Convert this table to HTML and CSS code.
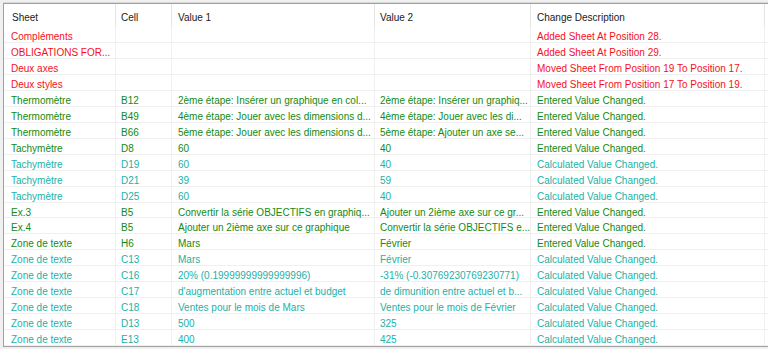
FILE: index.html
```html
<!DOCTYPE html>
<html>
<head>
<meta charset="utf-8">
<link rel="stylesheet" href="styles.css">
</head>
<body>
<div class="frame">
  <div class="row head">
    <div class="c c1">Sheet</div>
    <div class="c c2">Cell</div>
    <div class="c c3">Value 1</div>
    <div class="c c4">Value 2</div>
    <div class="c c5">Change Description</div>
    <div class="c fill"></div>
  </div>
  <div class="row red"><div class="c c1">Compléments</div><div class="c c2"></div><div class="c c3"></div><div class="c c4"></div><div class="c c5">Added Sheet At Position 28.</div><div class="c fill"></div></div>
  <div class="row red"><div class="c c1">OBLIGATIONS FOR...</div><div class="c c2"></div><div class="c c3"></div><div class="c c4"></div><div class="c c5">Added Sheet At Position 29.</div><div class="c fill"></div></div>
  <div class="row red"><div class="c c1">Deux axes</div><div class="c c2"></div><div class="c c3"></div><div class="c c4"></div><div class="c c5">Moved Sheet From Position 19 To Position 17.</div><div class="c fill"></div></div>
  <div class="row red"><div class="c c1">Deux styles</div><div class="c c2"></div><div class="c c3"></div><div class="c c4"></div><div class="c c5">Moved Sheet From Position 17 To Position 19.</div><div class="c fill"></div></div>
  <div class="row green"><div class="c c1">Thermomètre</div><div class="c c2">B12</div><div class="c c3">2ème étape: Insérer un graphique en col...</div><div class="c c4">2ème étape: Insérer un graphiq...</div><div class="c c5">Entered Value Changed.</div><div class="c fill"></div></div>
  <div class="row green"><div class="c c1">Thermomètre</div><div class="c c2">B49</div><div class="c c3">4ème étape: Jouer avec les dimensions d...</div><div class="c c4">4ème étape: Jouer avec les di...</div><div class="c c5">Entered Value Changed.</div><div class="c fill"></div></div>
  <div class="row green"><div class="c c1">Thermomètre</div><div class="c c2">B66</div><div class="c c3">5ème étape: Jouer avec les dimensions d...</div><div class="c c4">5ème étape: Ajouter un axe se...</div><div class="c c5">Entered Value Changed.</div><div class="c fill"></div></div>
  <div class="row green"><div class="c c1">Tachymètre</div><div class="c c2">D8</div><div class="c c3">60</div><div class="c c4">40</div><div class="c c5">Entered Value Changed.</div><div class="c fill"></div></div>
  <div class="row teal"><div class="c c1">Tachymètre</div><div class="c c2">D19</div><div class="c c3">60</div><div class="c c4">40</div><div class="c c5">Calculated Value Changed.</div><div class="c fill"></div></div>
  <div class="row teal"><div class="c c1">Tachymètre</div><div class="c c2">D21</div><div class="c c3">39</div><div class="c c4">59</div><div class="c c5">Calculated Value Changed.</div><div class="c fill"></div></div>
  <div class="row teal"><div class="c c1">Tachymètre</div><div class="c c2">D25</div><div class="c c3">60</div><div class="c c4">40</div><div class="c c5">Calculated Value Changed.</div><div class="c fill"></div></div>
  <div class="row green"><div class="c c1">Ex.3</div><div class="c c2">B5</div><div class="c c3">Convertir la série OBJECTIFS en graphiq...</div><div class="c c4">Ajouter un 2ième axe sur ce gr...</div><div class="c c5">Entered Value Changed.</div><div class="c fill"></div></div>
  <div class="row green"><div class="c c1">Ex.4</div><div class="c c2">B5</div><div class="c c3">Ajouter un 2ième axe sur ce graphique</div><div class="c c4">Convertir la série OBJECTIFS e...</div><div class="c c5">Entered Value Changed.</div><div class="c fill"></div></div>
  <div class="row green"><div class="c c1">Zone de texte</div><div class="c c2">H6</div><div class="c c3">Mars</div><div class="c c4">Février</div><div class="c c5">Entered Value Changed.</div><div class="c fill"></div></div>
  <div class="row teal"><div class="c c1">Zone de texte</div><div class="c c2">C13</div><div class="c c3">Mars</div><div class="c c4">Février</div><div class="c c5">Calculated Value Changed.</div><div class="c fill"></div></div>
  <div class="row teal"><div class="c c1">Zone de texte</div><div class="c c2">C16</div><div class="c c3">20% (0.19999999999999996)</div><div class="c c4">-31% (-0.30769230769230771)</div><div class="c c5">Calculated Value Changed.</div><div class="c fill"></div></div>
  <div class="row teal"><div class="c c1">Zone de texte</div><div class="c c2">C17</div><div class="c c3">d'augmentation entre actuel et budget</div><div class="c c4">de dimunition entre actuel et b...</div><div class="c c5">Calculated Value Changed.</div><div class="c fill"></div></div>
  <div class="row teal"><div class="c c1">Zone de texte</div><div class="c c2">C18</div><div class="c c3">Ventes pour le mois de Mars</div><div class="c c4">Ventes pour le mois de Février</div><div class="c c5">Calculated Value Changed.</div><div class="c fill"></div></div>
  <div class="row teal"><div class="c c1">Zone de texte</div><div class="c c2">D13</div><div class="c c3">500</div><div class="c c4">325</div><div class="c c5">Calculated Value Changed.</div><div class="c fill"></div></div>
  <div class="row teal"><div class="c c1">Zone de texte</div><div class="c c2">E13</div><div class="c c3">400</div><div class="c c4">425</div><div class="c c5">Calculated Value Changed.</div><div class="c fill"></div></div>
</div>
</body>
</html>
```
FILE: styles.css
```css
html, body {
  margin: 0;
  padding: 0;
  background: #f0f0f0;
  overflow: hidden;
}
body {
  font-family: "Liberation Sans", Arial, sans-serif;
  font-size: 10px;
  width: 768px;
  height: 349px;
}
.frame {
  margin: 3px 0 0 3px;
  width: 765px;
  height: 342px;
  border: 1px solid #a0a0a0;
  border-right: none;
  box-sizing: content-box;
  background: #ffffff;
  overflow: hidden;
  box-shadow: 0 -1px 0 #d9d9d9;
}
.row {
  display: flex;
  height: 15.93px;
  box-sizing: border-box;
  border-bottom: 1px solid #f0f0f0;
}
.row.head {
  height: 23.4px;
  border-bottom: none;
  color: #1a1a1a;
}
.c {
  box-sizing: border-box;
  flex: none;
  line-height: 12px;
  padding-left: 6px;
  padding-top: 4px;
  white-space: nowrap;
  overflow-x: clip;
  overflow-y: visible;
  border-right: 1px solid #f0f0f0;
}
.head .c {
  border-right-color: #e5e5e5;
  padding-top: 7.5px;
}
.c1 { width: 112px; padding-left: 7px; }
.head .c1 { padding-left: 8px; }
.c2 { width: 56px; padding-left: 5px; }
.c3 { width: 203px; }
.c4 { width: 156px; padding-left: 5px; }
.c5 { width: 234px; }
.fill { flex: 1 0 0; min-width: 0; border-right: none; }
.red { color: #f5101c; }
.green { color: #138a13; }
.teal { color: #22b1a8; }
```
